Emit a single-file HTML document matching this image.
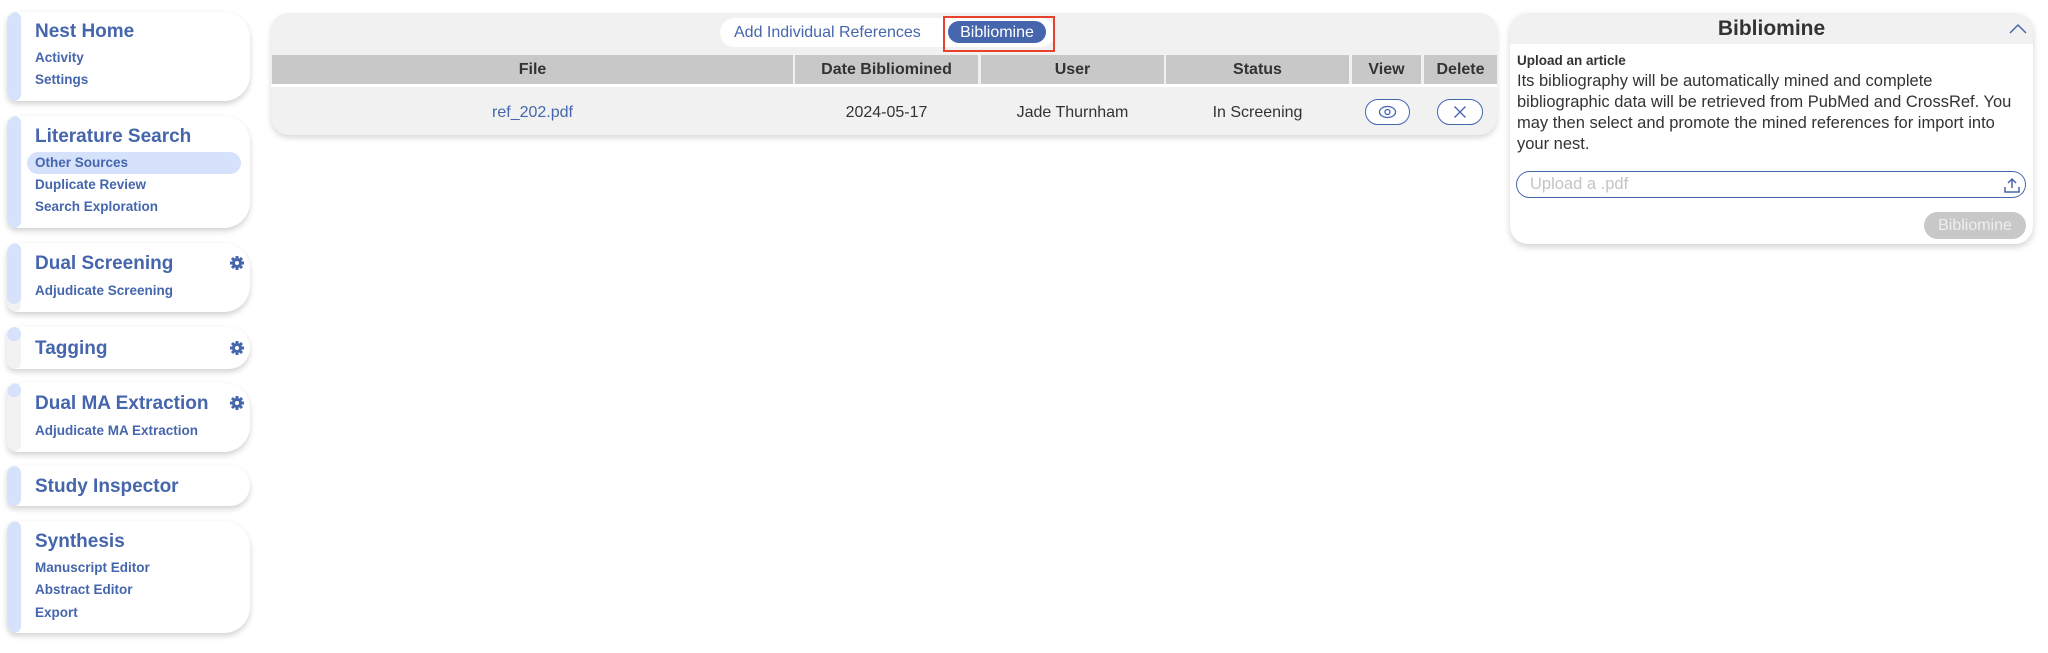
<!DOCTYPE html>
<html><head><meta charset="utf-8"><style>
*{box-sizing:border-box;margin:0;padding:0}
body{width:2048px;height:653px;background:#fff;font-family:"Liberation Sans",Arial,sans-serif;position:relative;overflow:hidden}
.card{position:absolute;left:7px;width:243px;background:#fff;border-radius:10px 26px 26px 10px;box-shadow:0 3px 6px rgba(0,0,0,.18);overflow:hidden}
.bar{position:absolute;left:0;top:0;bottom:0;width:14px;background:#f2f2f2;border-radius:7px}
.bar i{position:absolute;left:0;top:0;width:14px;background:#d6e2fb;border-radius:7px}
.t{position:absolute;left:28px;font-size:19px;font-weight:bold;color:#4566ac}
.s{position:absolute;left:20px;font-size:13.5px;font-weight:bold;color:#4566ac;padding-left:8px;width:214px;height:22px;line-height:22px;border-radius:11px}
.gear{position:absolute;left:222px;width:16px;height:16px}
.main{position:absolute;left:271px;top:13px;width:1226px;height:122px;background:#f1f1f1;border-radius:18px;box-shadow:0 3px 6px rgba(0,0,0,.15);overflow:hidden}
.th{position:absolute;top:42px;height:29px;background:#c8c8c8;font-size:16px;font-weight:bold;color:#333;text-align:center;line-height:29px}
.td{position:absolute;top:91px;font-size:16px;color:#333;text-align:center}
.right{position:absolute;left:1510px;top:13px;width:523px;height:231px;background:#fff;border-radius:18px;box-shadow:0 3px 7px rgba(0,0,0,.18);overflow:hidden}
</style></head><body>

<div class="card" style="top:12px;height:89px"><div class="bar"><i style="height:100%"></i></div>
<div class="t" style="top:9px">Nest Home</div>
<div class="s" style="top:35px">Activity</div><div class="s" style="top:57px">Settings</div></div>

<div class="card" style="top:116px;height:112px"><div class="bar"><i style="height:100%"></i></div>
<div class="t" style="top:10px">Literature Search</div>
<div class="s" style="top:36px;background:#d6e2fb">Other Sources</div><div class="s" style="top:58px">Duplicate Review</div><div class="s" style="top:80px">Search Exploration</div></div>

<div class="card" style="top:243px;height:69px"><div class="bar"><i style="height:88%"></i></div>
<div class="t" style="top:10px">Dual Screening</div>
<svg class="gear" style="top:12px" viewBox="0 0 16 16"><circle cx="8" cy="8" r="5" fill="#4566ac"/><g stroke="#4566ac" stroke-width="3"><path d="M8 1v14M1 8h14M3 3l10 10M13 3L3 13"/></g><circle cx="8" cy="8" r="2" fill="#fff"/></svg>
<div class="s" style="top:37px">Adjudicate Screening</div></div>

<div class="card" style="top:327px;height:42px"><div class="bar"><i style="height:14px"></i></div>
<div class="t" style="top:11px">Tagging</div>
<svg class="gear" style="top:13px" viewBox="0 0 16 16"><circle cx="8" cy="8" r="5" fill="#4566ac"/><g stroke="#4566ac" stroke-width="3"><path d="M8 1v14M1 8h14M3 3l10 10M13 3L3 13"/></g><circle cx="8" cy="8" r="2" fill="#fff"/></svg></div>

<div class="card" style="top:383px;height:69px"><div class="bar"><i style="height:14px"></i></div>
<div class="t" style="top:10px">Dual MA Extraction</div>
<svg class="gear" style="top:12px" viewBox="0 0 16 16"><circle cx="8" cy="8" r="5" fill="#4566ac"/><g stroke="#4566ac" stroke-width="3"><path d="M8 1v14M1 8h14M3 3l10 10M13 3L3 13"/></g><circle cx="8" cy="8" r="2" fill="#fff"/></svg>
<div class="s" style="top:37px">Adjudicate MA Extraction</div></div>

<div class="card" style="top:466px;height:40px"><div class="bar"><i style="height:100%"></i></div>
<div class="t" style="top:10px">Study Inspector</div></div>

<div class="card" style="top:521px;height:112px"><div class="bar"><i style="height:100%"></i></div>
<div class="t" style="top:10px">Synthesis</div>
<div class="s" style="top:36px">Manuscript Editor</div><div class="s" style="top:58px">Abstract Editor</div><div class="s" style="top:81px">Export</div></div>

<div class="main">
<div style="position:absolute;left:449px;top:5px;width:335px;height:29px;background:#fff;border-radius:15px"></div>
<div style="position:absolute;left:463px;top:11px;font-size:16px;color:#4566ac">Add Individual References</div>
<div style="position:absolute;left:672px;top:3px;width:112px;height:36px;border:2px solid #e8412c"></div>
<div style="position:absolute;left:677px;top:8px;width:98px;height:22px;background:#4566ac;border-radius:11px;color:#fff;font-size:16px;text-align:center;line-height:23px">Bibliomine</div>
<div class="th" style="left:1px;width:521px">File</div>
<div class="th" style="left:524px;width:183px">Date Bibliomined</div>
<div class="th" style="left:710px;width:183px">User</div>
<div class="th" style="left:895px;width:183px">Status</div>
<div class="th" style="left:1081px;width:69px">View</div>
<div class="th" style="left:1153px;width:73px">Delete</div>
<div style="position:absolute;left:0;top:71px;width:100%;height:3px;background:#fff"></div>
<div class="td" style="left:1px;width:521px;color:#4566ac">ref_202.pdf</div>
<div class="td" style="left:524px;width:183px">2024-05-17</div>
<div class="td" style="left:710px;width:183px">Jade Thurnham</div>
<div class="td" style="left:895px;width:183px">In Screening</div>
<div style="position:absolute;left:1094px;top:86px;width:45px;height:26px;border:1.5px solid #4566ac;border-radius:13px;background:#fff"><svg width="45" height="26" viewBox="0 0 45 26" style="position:absolute;left:-1.5px;top:-1.5px"><ellipse cx="22.5" cy="13" rx="8" ry="5.5" fill="none" stroke="#4566ac" stroke-width="1.3"/><circle cx="22.5" cy="13" r="2.5" fill="none" stroke="#4566ac" stroke-width="1.3"/></svg></div>
<div style="position:absolute;left:1166px;top:86px;width:46px;height:26px;border:1.5px solid #4566ac;border-radius:13px;background:#fff"><svg width="46" height="26" style="position:absolute;left:-1.5px;top:-1.5px"><path d="M17.5 7.5l11 11M28.5 7.5l-11 11" stroke="#4566ac" stroke-width="1.3"/></svg></div>
</div>

<div class="right">
<div style="position:absolute;left:0;top:0;width:100%;height:31px;background:#f1f1f1"></div>
<div style="position:absolute;left:0;top:4px;width:100%;text-align:center;font-size:21px;font-weight:bold;color:#333">Bibliomine</div>
<svg style="position:absolute;left:498px;top:9px" width="20" height="14"><path d="M2 11L10 3l8 8" fill="none" stroke="#4566ac" stroke-width="1.5"/></svg>
<div style="position:absolute;left:7px;top:40px;font-size:13.5px;font-weight:bold;color:#333">Upload an article</div>
<div style="position:absolute;left:7px;top:58px;width:512px;font-size:16.5px;line-height:21px;color:#333">Its bibliography will be automatically mined and complete bibliographic data will be retrieved from PubMed and CrossRef. You may then select and promote the mined references for import into your nest.</div>
<div style="position:absolute;left:6px;top:158px;width:510px;height:27px;border:1.5px solid #4566ac;border-radius:14px"></div>
<div style="position:absolute;left:20px;top:162px;font-size:16.5px;color:#c4c4c4">Upload a .pdf</div>
<svg style="position:absolute;left:493px;top:163px" width="18" height="18"><path d="M9 12V3M5 7l4-4 4 4M2 11v5h14v-5" fill="none" stroke="#4566ac" stroke-width="1.5"/></svg>
<div style="position:absolute;left:414px;top:199px;width:102px;height:27px;background:#c8c8c8;border-radius:14px;color:#eee;font-size:16px;text-align:center;line-height:27px">Bibliomine</div>
</div>
</body></html>
